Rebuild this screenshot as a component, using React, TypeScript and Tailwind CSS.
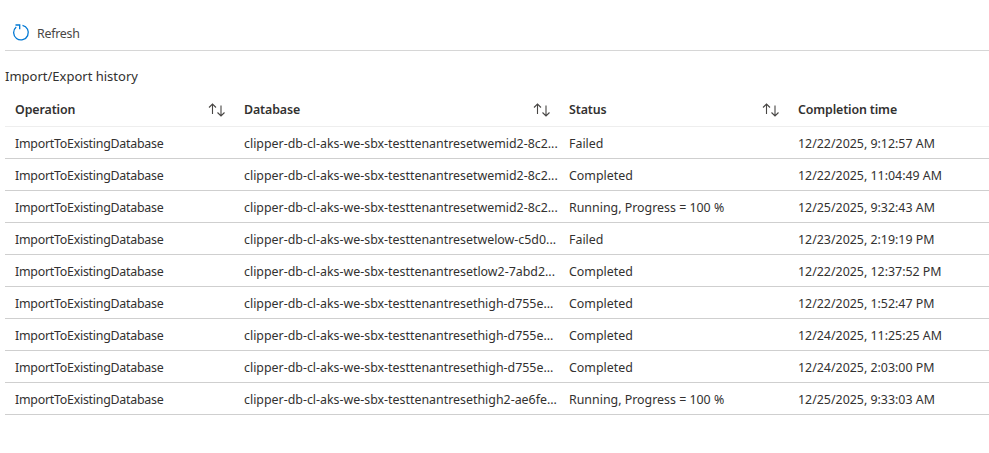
const rows = [
  ["clipper-db-cl-aks-we-sbx-testtenantresetwemid2-8c2...", "Failed", "12/22/2025, 9:12:57 AM"],
  ["clipper-db-cl-aks-we-sbx-testtenantresetwemid2-8c2...", "Completed", "12/22/2025, 11:04:49 AM"],
  ["clipper-db-cl-aks-we-sbx-testtenantresetwemid2-8c2...", "Running, Progress = 100 %", "12/25/2025, 9:32:43 AM"],
  ["clipper-db-cl-aks-we-sbx-testtenantresetwelow-c5d0...", "Failed", "12/23/2025, 2:19:19 PM"],
  ["clipper-db-cl-aks-we-sbx-testtenantresetlow2-7abd2...", "Completed", "12/22/2025, 12:37:52 PM"],
  ["clipper-db-cl-aks-we-sbx-testtenantresethigh-d755e...", "Completed", "12/22/2025, 1:52:47 PM"],
  ["clipper-db-cl-aks-we-sbx-testtenantresethigh-d755e...", "Completed", "12/24/2025, 11:25:25 AM"],
  ["clipper-db-cl-aks-we-sbx-testtenantresethigh-d755e...", "Completed", "12/24/2025, 2:03:00 PM"],
  ["clipper-db-cl-aks-we-sbx-testtenantresethigh2-ae6fe...", "Running, Progress = 100 %", "12/25/2025, 9:33:03 AM"],
];

function Sort() {
  return (
    <svg width="18" height="16" viewBox="0 0 18 16" fill="none" stroke="#484644" strokeWidth="1.1">
      <path d="M4.5 3V13M1 6.5L4.5 3L8 6.5" />
      <path d="M13 4.5V15M9.5 11.5L13 15L16.5 11.5" />
    </svg>
  );
}

const grid = "grid grid-cols-[229px_325px_229px_201px]";

export default function App() {
  return (
    <div className="w-[989px] h-[453px] bg-white pt-[16px] pl-[5px] font-['Noto_Sans',sans-serif] text-[12.4px] text-[#323130] overflow-hidden">
      <div className="h-[35px] border-b border-[#d6d6d6] flex items-center pl-[7px] pt-[3px]">
        <svg width="18" height="18" viewBox="0 0 18 18" fill="none" stroke="#0078d4" strokeWidth="1.3" className="mb-[3px]">
          <path d="M10.5 1.4A7.35 7.35 0 1 1 4.2 3" />
          <path d="M3.5 1H7.7V5.2" />
        </svg>
        <span className="ml-[7px] text-[#484644] tracking-[-0.25px]">Refresh</span>
      </div>
      <div className="mt-[15px] h-[20px] leading-[20px] text-[13px]">Import/Export history</div>
      <div className={`${grid} h-[34px] mt-[7px] items-center border-b border-[#eeeeee] font-semibold`}>
        {["Operation", "Database", "Status"].map((h) => (
          <div key={h} className="pl-[10px] pr-[8px] flex items-center justify-between">
            <span className="tracking-[-0.1px] pt-[2px]">{h}</span>
            <Sort />
          </div>
        ))}
        <div className="pl-[10px] tracking-[-0.13px] pt-[2px]">Completion time</div>
      </div>
      {rows.map((r, i) => (
        <div key={i} className={`${grid} h-[32px] items-center border-b border-[#cfcfcf] pt-[3px]`}>
          <div className="pl-[10px] tracking-[-0.25px]">ImportToExistingDatabase</div>
          <div className="pl-[10px] whitespace-nowrap">{r[0]}</div>
          <div className="pl-[10px]">{r[1]}</div>
          <div className="pl-[10px]">{r[2]}</div>
        </div>
      ))}
    </div>
  );
}
